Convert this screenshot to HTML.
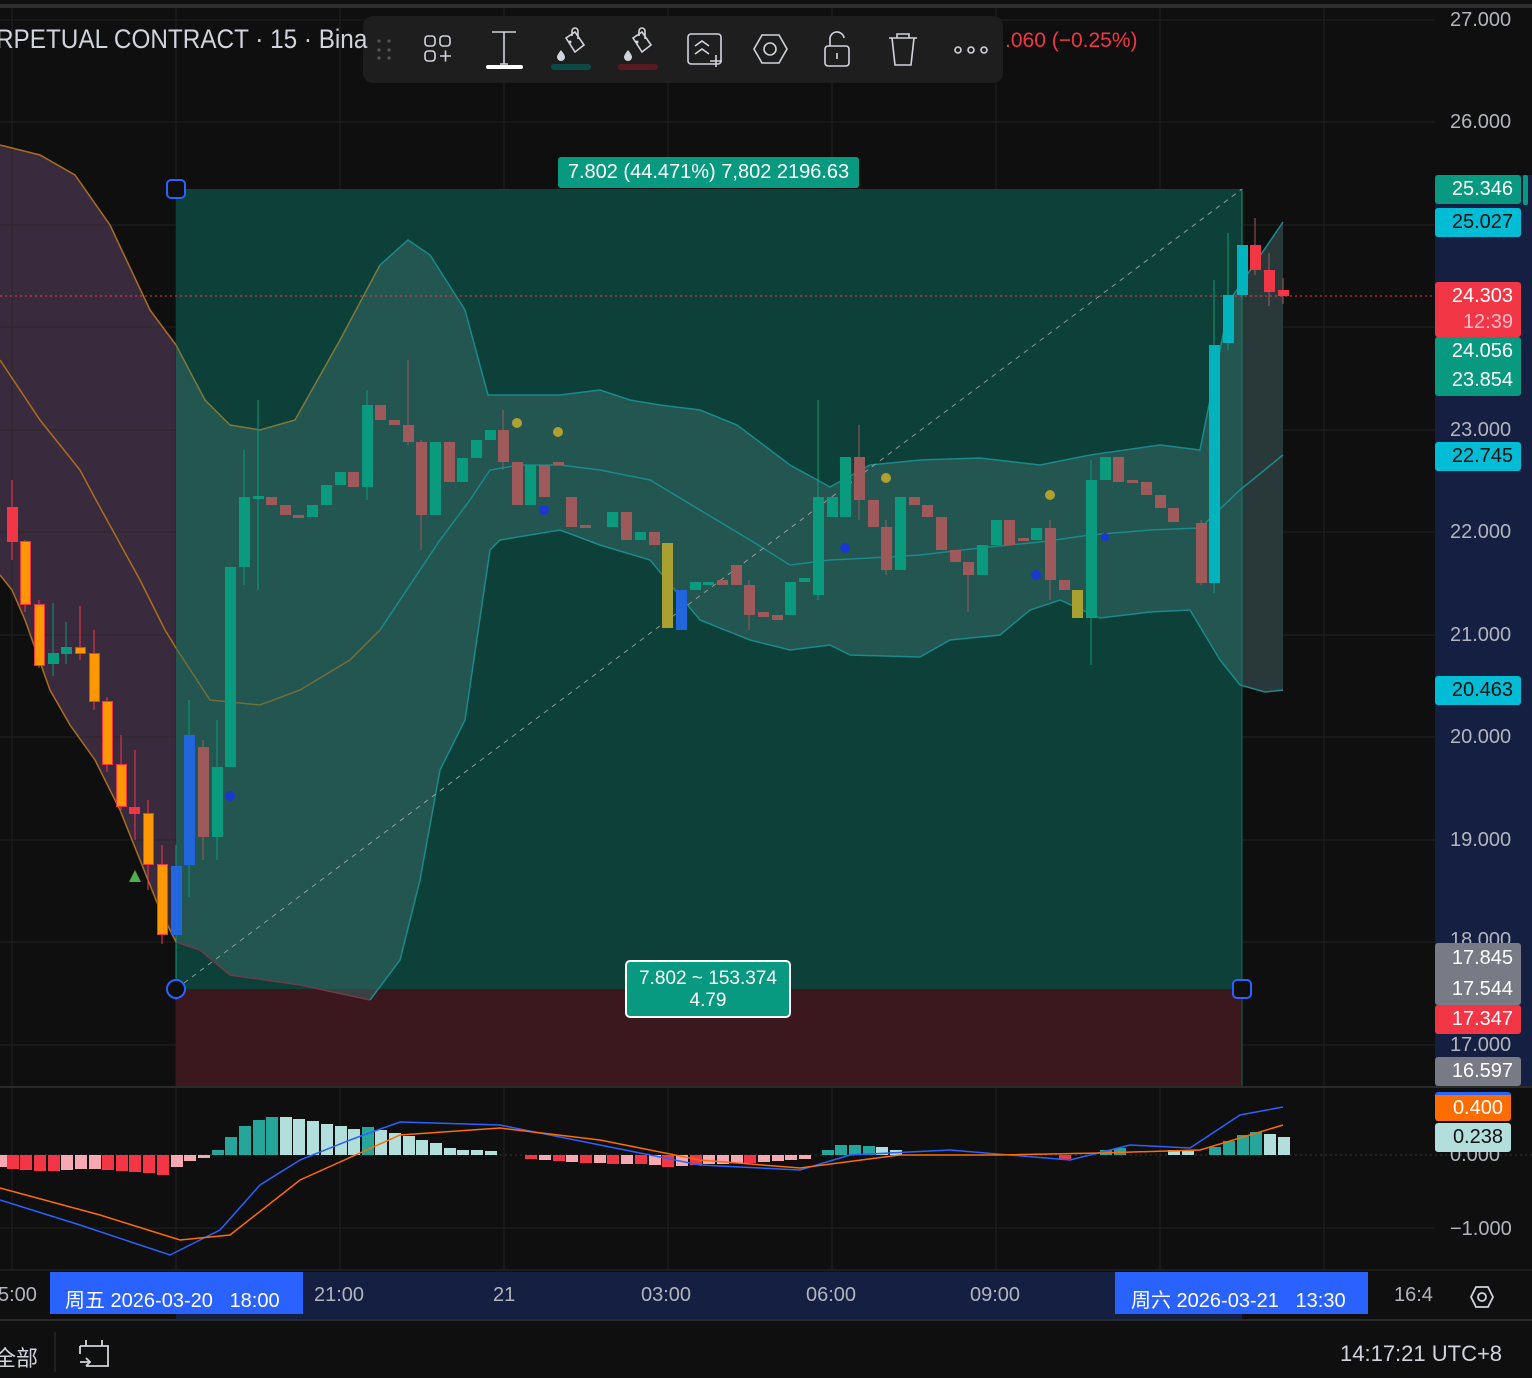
<!DOCTYPE html>
<html><head><meta charset="utf-8"><style>
*{margin:0;padding:0;box-sizing:border-box}
body{width:1532px;height:1378px;background:#0f0f0f;overflow:hidden;position:relative;font-family:"Liberation Sans","Noto Sans CJK SC",sans-serif;color:#b2b5be}
.pl{position:absolute;left:1435px;width:86px;height:29px;border-radius:3px;color:#fff;font-size:20px;text-align:right;padding-right:8px;line-height:29px}
.ax{position:absolute;left:1450px;font-size:20px;color:#b2b5be}
.tl{position:absolute;top:1284px;font-size:20px;color:#b2b5be}
</style></head><body>
<svg width="1532" height="1378" style="position:absolute;left:0;top:0">
<rect x="0" y="4" width="1532" height="4" fill="#2e2e2e"/>
<rect x="1435" y="175" width="97" height="912" fill="#151f42"/>
<!-- purple left band -->
<polygon points="0,145 40,155 75,175 110,225 150,310 176,345 176,942 160,910 140,860 120,810 95,760 70,725 50,690 25,620 12,590 0,575" fill="#3a2a3e"/>
<!-- grid -->
<g stroke="#262626" stroke-width="1" opacity=".8">
<line x1="0" y1="20" x2="1435" y2="20"/><line x1="0" y1="122" x2="1435" y2="122"/><line x1="0" y1="225" x2="1435" y2="225"/><line x1="0" y1="327" x2="1435" y2="327"/><line x1="0" y1="430" x2="1435" y2="430"/><line x1="0" y1="532" x2="1435" y2="532"/><line x1="0" y1="635" x2="1435" y2="635"/><line x1="0" y1="737" x2="1435" y2="737"/><line x1="0" y1="840" x2="1435" y2="840"/><line x1="0" y1="942" x2="1435" y2="942"/><line x1="0" y1="1045" x2="1435" y2="1045"/>
<line x1="12" y1="8" x2="12" y2="1270"/><line x1="176" y1="8" x2="176" y2="1270"/><line x1="340" y1="8" x2="340" y2="1270"/><line x1="504" y1="8" x2="504" y2="1270"/><line x1="668" y1="8" x2="668" y2="1270"/><line x1="832" y1="8" x2="832" y2="1270"/><line x1="996" y1="8" x2="996" y2="1270"/><line x1="1160" y1="8" x2="1160" y2="1270"/><line x1="1324" y1="8" x2="1324" y2="1270"/>
<line x1="0" y1="1228" x2="1435" y2="1228"/>
</g>
<!-- position boxes -->
<rect x="176" y="189" width="1066" height="800" fill="#0c4038"/>
<rect x="176" y="989" width="1066" height="98" fill="#3b181d"/>
<!-- BB fill -->
<polygon points="176,345 205,400 230,425 260,430 295,420 340,340 380,265 408,240 430,255 465,310 488,395 560,395 600,390 630,400 660,405 700,410 737,425 790,465 830,487 870,465 920,460 980,458 1040,465 1090,455 1160,445 1200,450 1230,300 1283,222 1283,690 1265,692 1240,685 1220,660 1190,610 1150,612 1100,618 1060,600 1030,610 1000,635 950,640 920,657 850,655 830,645 790,650 750,640 700,620 650,560 600,545 560,530 500,540 490,550 465,720 440,770 420,880 400,960 370,1000 300,985 230,975 200,950 176,942" fill="#3a6a6a" fill-opacity="0.5"/>
<polygon points="1242,280 1283,222 1283,690 1265,692 1242,685" fill="#29393a"/>
<!-- BB lines -->
<polyline fill="none" stroke="#a86f1f" stroke-width="1.5" points="0,145 40,155 75,175 110,225 150,310 176,345"/>
<polyline fill="none" stroke="#a86f1f" stroke-width="1.5" points="0,360 40,420 80,470 96,500 140,580 165,630 176,648"/>
<polyline fill="none" stroke="#a86f1f" stroke-width="1.5" points="0,575 12,590 25,620 50,690 70,725 95,760 120,810 140,860 160,910 176,942"/>
<polyline fill="none" stroke="#7a7a3a" stroke-width="1.5" points="176,345 205,400 230,425 260,430 295,420 340,340 380,265"/>
<polyline fill="none" stroke="#1a8a8a" stroke-width="1.5" points="380,265 408,240 430,255 465,310 488,395 560,395 600,390 630,400 660,405 700,410 737,425 790,465 830,487 870,465 920,460 980,458 1040,465 1090,455 1160,445 1200,450 1230,300 1283,222"/>
<polyline fill="none" stroke="#6f6f3a" stroke-width="1.5" points="176,648 210,700 260,705 300,690 350,660 380,630"/>
<polyline fill="none" stroke="#1a8a8a" stroke-width="1.5" points="380,630 410,585 440,540 470,500 490,470 520,465 560,465 600,470 650,480 700,510 750,540 790,565 830,560 870,558 920,555 980,548 1040,542 1090,535 1150,530 1200,528 1240,490 1283,455"/>
<polyline fill="none" stroke="#6f3a4a" stroke-width="1.5" points="176,942 200,950 230,975 300,985 370,1000"/>
<polyline fill="none" stroke="#1a8a8a" stroke-width="1.5" points="370,1000 400,960 420,880 440,770 465,720 490,550 500,540 560,530 600,545 650,560 700,620 750,640 790,650 830,645 850,655 920,657 950,640 1000,635 1030,610 1060,600 1100,618 1150,612 1190,610 1220,660 1240,685 1265,692 1283,690"/>
<line x1="176" y1="989" x2="1242" y2="189" stroke="#8a9a98" stroke-width="1" stroke-dasharray="5,5"/>
<line x1="1242" y1="189" x2="1242" y2="1087" stroke="#089981" stroke-width="1" opacity=".6"/>
<line x1="0" y1="296" x2="1435" y2="296" stroke="#f23645" stroke-dasharray="2,3"/>
<!-- candles -->
<g stroke-width="1">
<g stroke="#f23645"><line x1="12" y1="480" x2="12" y2="560"/><line x1="25" y1="540" x2="25" y2="612"/><line x1="39" y1="600" x2="39" y2="668"/><line x1="80" y1="606" x2="80" y2="660"/><line x1="94" y1="630" x2="94" y2="710"/><line x1="107" y1="697" x2="107" y2="772"/><line x1="121" y1="735" x2="121" y2="810"/><line x1="135" y1="750" x2="135" y2="840"/><line x1="148" y1="800" x2="148" y2="890"/><line x1="162" y1="845" x2="162" y2="944"/></g>
<g stroke="#0a9a7d"><line x1="53" y1="603" x2="53" y2="676"/><line x1="66" y1="622" x2="66" y2="664"/><line x1="176" y1="845" x2="176" y2="1000"/><line x1="189" y1="700" x2="189" y2="897"/></g>
<g fill="#f23645"><rect x="7" y="507" width="11" height="35"/><rect x="129" y="807" width="11" height="7"/></g>
<g fill="#ff9800" stroke="#f23645"><rect x="20.5" y="541.5" width="10" height="63"/><rect x="34.5" y="604.5" width="10" height="61"/><rect x="75.5" y="647.5" width="10" height="6"/><rect x="89.5" y="653.5" width="10" height="48"/><rect x="102.5" y="701.5" width="10" height="63"/><rect x="116.5" y="764.5" width="10" height="42"/><rect x="143.5" y="813.5" width="10" height="51"/><rect x="157.5" y="864.5" width="10" height="70"/></g>
<g fill="#0a9a7d"><rect x="48" y="653" width="11" height="11"/><rect x="61" y="647" width="11" height="7"/></g>
<g fill="#2266dd"><rect x="171" y="866" width="11" height="69"/><rect x="184" y="735" width="11" height="130"/><rect x="676" y="590" width="11" height="40"/></g>
<g stroke="#0a9a7d"><line x1="258" y1="400" x2="258" y2="590"/><line x1="244" y1="450" x2="244" y2="585"/><line x1="367" y1="390" x2="367" y2="500"/><line x1="818" y1="400" x2="818" y2="600"/><line x1="1091" y1="460" x2="1091" y2="665"/><line x1="1214" y1="280" x2="1214" y2="593"/><line x1="1228" y1="233" x2="1228" y2="350"/><line x1="1242" y1="189" x2="1242" y2="300"/><line x1="217" y1="720" x2="217" y2="860"/></g>
<g stroke="#9e5a5a"><line x1="203" y1="740" x2="203" y2="860"/><line x1="408" y1="360" x2="408" y2="445"/><line x1="421" y1="440" x2="421" y2="550"/><line x1="503" y1="410" x2="503" y2="470"/><line x1="859" y1="425" x2="859" y2="520"/><line x1="886" y1="520" x2="886" y2="575"/><line x1="1050" y1="520" x2="1050" y2="600"/><line x1="1201" y1="520" x2="1201" y2="585"/><line x1="968" y1="565" x2="968" y2="612"/><line x1="749" y1="580" x2="749" y2="630"/><line x1="1255" y1="218" x2="1255" y2="275"/><line x1="1269" y1="253" x2="1269" y2="306"/><line x1="1283" y1="278" x2="1283" y2="304"/></g>
<g fill="#0a9a7d"><rect x="212" y="767" width="11" height="70"/><rect x="225" y="567" width="11" height="200"/><rect x="239" y="497" width="11" height="70"/><rect x="253" y="496" width="11" height="3"/><rect x="307" y="505" width="11" height="12"/><rect x="321" y="485" width="11" height="20"/><rect x="335" y="472" width="11" height="13"/><rect x="362" y="405" width="11" height="82"/><rect x="430" y="442" width="11" height="73"/><rect x="457" y="458" width="11" height="24"/><rect x="471" y="440" width="11" height="18"/><rect x="485" y="430" width="11" height="10"/><rect x="525" y="465" width="11" height="40"/><rect x="607" y="512" width="11" height="15"/><rect x="635" y="532" width="11" height="8"/><rect x="690" y="582" width="11" height="8"/><rect x="703" y="582" width="11" height="3"/><rect x="785" y="582" width="11" height="33"/><rect x="799" y="578" width="11" height="4"/><rect x="813" y="497" width="11" height="98"/><rect x="827" y="497" width="11" height="20"/><rect x="840" y="457" width="11" height="60"/><rect x="895" y="497" width="11" height="73"/><rect x="977" y="545" width="11" height="30"/><rect x="991" y="520" width="11" height="25"/><rect x="1031" y="528" width="11" height="12"/><rect x="1086" y="480" width="11" height="138"/><rect x="1100" y="457" width="11" height="23"/></g>
<g fill="#9e5a5a"><rect x="198" y="747" width="11" height="90"/><rect x="266" y="497" width="11" height="8"/><rect x="280" y="505" width="11" height="10"/><rect x="293" y="515" width="11" height="3"/><rect x="348" y="472" width="11" height="15"/><rect x="375" y="405" width="11" height="15"/><rect x="389" y="420" width="11" height="5"/><rect x="403" y="425" width="11" height="17"/><rect x="416" y="442" width="11" height="73"/><rect x="444" y="442" width="11" height="40"/><rect x="498" y="430" width="11" height="32"/><rect x="512" y="462" width="11" height="43"/><rect x="539" y="465" width="11" height="32"/><rect x="553" y="462" width="11" height="3"/><rect x="566" y="497" width="11" height="30"/><rect x="580" y="525" width="11" height="3"/><rect x="621" y="512" width="11" height="28"/><rect x="649" y="532" width="11" height="13"/><rect x="717" y="580" width="11" height="5"/><rect x="731" y="565" width="11" height="20"/><rect x="744" y="585" width="11" height="30"/><rect x="758" y="612" width="11" height="5"/><rect x="772" y="615" width="11" height="5"/><rect x="854" y="457" width="11" height="43"/><rect x="868" y="500" width="11" height="27"/><rect x="881" y="527" width="11" height="43"/><rect x="909" y="497" width="11" height="8"/><rect x="922" y="505" width="11" height="12"/><rect x="936" y="517" width="11" height="33"/><rect x="950" y="550" width="11" height="12"/><rect x="963" y="562" width="11" height="13"/><rect x="1004" y="520" width="11" height="25"/><rect x="1018" y="538" width="11" height="3"/><rect x="1045" y="528" width="11" height="52"/><rect x="1059" y="580" width="11" height="10"/><rect x="1113" y="457" width="11" height="25"/><rect x="1127" y="480" width="11" height="3"/><rect x="1141" y="482" width="11" height="13"/><rect x="1155" y="495" width="11" height="13"/><rect x="1168" y="508" width="11" height="14"/><rect x="1196" y="523" width="11" height="60"/></g>
<g fill="#a9a032"><rect x="662" y="543" width="11" height="85"/><rect x="1072" y="590" width="11" height="28"/></g>
<g fill="#00b3bd"><rect x="1209" y="345" width="11" height="238"/><rect x="1223" y="295" width="11" height="48"/><rect x="1237" y="245" width="11" height="50"/></g>
<g fill="#f23645"><rect x="1250" y="245" width="11" height="25"/><rect x="1264" y="270" width="11" height="22"/><rect x="1278" y="290" width="11" height="6"/></g>
</g>
<g fill="#b0a030"><circle cx="517" cy="423" r="5"/><circle cx="558" cy="432" r="5"/><circle cx="886" cy="478" r="5"/><circle cx="1050" cy="495" r="5"/></g>
<g fill="#1838d0"><circle cx="230" cy="796" r="5"/><circle cx="544" cy="510" r="5"/><circle cx="845" cy="548" r="5"/><circle cx="1036" cy="575" r="5"/><circle cx="1105" cy="537" r="4"/></g>
<polygon points="129,882 135,870 141,882" fill="#4caf50"/>
<rect x="167" y="180" width="18" height="18" rx="4" fill="#0f0f0f" stroke="#2962ff" stroke-width="2"/>
<rect x="1233" y="980" width="18" height="18" rx="4" fill="#0f0f0f" stroke="#2962ff" stroke-width="2"/>
<circle cx="176" cy="989" r="9" fill="#0f0f0f" stroke="#2962ff" stroke-width="2"/>
<!-- MACD pane -->
<line x1="0" y1="1087" x2="1532" y2="1087" stroke="#2a2a2a" stroke-width="2"/>
<line x1="0" y1="1155" x2="1532" y2="1155" stroke="#333" stroke-dasharray="2,3"/>
<g fill="#f7a9b3"><rect x="0" y="1155" width="12" height="12"/><rect x="61" y="1155" width="12" height="15"/><rect x="75" y="1155" width="12" height="14"/><rect x="89" y="1155" width="12" height="14"/><rect x="171" y="1155" width="12" height="12"/><rect x="184" y="1155" width="12" height="6"/><rect x="198" y="1155" width="12" height="3"/></g>
<g fill="#f23645"><rect x="7" y="1155" width="12" height="14"/><rect x="20" y="1155" width="12" height="15"/><rect x="34" y="1155" width="12" height="16"/><rect x="48" y="1155" width="12" height="16"/><rect x="102" y="1155" width="12" height="15"/><rect x="116" y="1155" width="12" height="16"/><rect x="143" y="1155" width="12" height="18"/><rect x="157" y="1155" width="12" height="20"/><rect x="129" y="1155" width="12" height="17"/></g>
<g fill="#26a69a"><rect x="212" y="1150" width="12" height="5"/><rect x="225" y="1137" width="12" height="18"/><rect x="239" y="1126" width="12" height="29"/><rect x="253" y="1120" width="12" height="35"/><rect x="266" y="1117" width="12" height="38"/></g>
<g fill="#b2dfdb"><rect x="280" y="1117" width="12" height="38"/><rect x="293" y="1119" width="12" height="36"/><rect x="307" y="1121" width="12" height="34"/><rect x="321" y="1124" width="12" height="31"/><rect x="335" y="1126" width="12" height="29"/><rect x="348" y="1129" width="12" height="26"/><rect x="375" y="1130" width="12" height="25"/><rect x="389" y="1133" width="12" height="22"/><rect x="403" y="1136" width="12" height="19"/><rect x="416" y="1140" width="12" height="15"/><rect x="430" y="1143" width="12" height="12"/><rect x="444" y="1148" width="12" height="7"/><rect x="457" y="1150" width="12" height="5"/><rect x="471" y="1150" width="12" height="5"/><rect x="485" y="1151" width="12" height="4"/><rect x="876" y="1147" width="12" height="8"/><rect x="890" y="1150" width="12" height="5"/><rect x="1264" y="1134" width="12" height="21"/><rect x="1278" y="1137" width="12" height="18"/><rect x="1168" y="1150" width="12" height="5"/><rect x="1182" y="1151" width="12" height="4"/></g>
<g fill="#26a69a"><rect x="362" y="1127" width="12" height="28"/><rect x="822" y="1150" width="12" height="5"/><rect x="835" y="1145" width="12" height="10"/><rect x="849" y="1145" width="12" height="10"/><rect x="863" y="1146" width="12" height="9"/><rect x="1100" y="1150" width="12" height="5"/><rect x="1114" y="1148" width="12" height="7"/><rect x="1209" y="1147" width="12" height="8"/><rect x="1223" y="1141" width="12" height="14"/><rect x="1237" y="1135" width="12" height="20"/><rect x="1250" y="1132" width="12" height="23"/></g>
<g fill="#f23645"><rect x="525" y="1155" width="12" height="4"/><rect x="553" y="1155" width="12" height="6"/><rect x="580" y="1155" width="12" height="8"/><rect x="607" y="1155" width="12" height="9"/><rect x="635" y="1155" width="12" height="9"/><rect x="662" y="1155" width="12" height="12"/><rect x="690" y="1155" width="12" height="10"/><rect x="744" y="1155" width="12" height="8"/><rect x="1059" y="1155" width="12" height="4"/></g>
<g fill="#f7a9b3"><rect x="539" y="1155" width="12" height="5"/><rect x="566" y="1155" width="12" height="7"/><rect x="594" y="1155" width="12" height="8"/><rect x="621" y="1155" width="12" height="9"/><rect x="649" y="1155" width="12" height="10"/><rect x="676" y="1155" width="12" height="11"/><rect x="703" y="1155" width="12" height="9"/><rect x="717" y="1155" width="12" height="9"/><rect x="731" y="1155" width="12" height="8"/><rect x="758" y="1155" width="12" height="7"/><rect x="772" y="1155" width="12" height="6"/><rect x="785" y="1155" width="12" height="5"/><rect x="799" y="1155" width="12" height="4"/></g>
<polyline fill="none" stroke="#2962ff" stroke-width="1.5" points="0,1200 80,1225 170,1255 220,1230 260,1185 300,1160 350,1140 400,1122 500,1125 600,1145 700,1165 800,1170 850,1155 950,1150 1070,1160 1130,1145 1190,1148 1240,1115 1283,1107"/>
<polyline fill="none" stroke="#ff6d00" stroke-width="1.5" points="0,1188 100,1215 180,1240 230,1235 300,1180 400,1135 500,1128 600,1140 700,1160 800,1168 900,1155 1000,1155 1100,1153 1200,1150 1283,1125"/>
<!-- time axis -->
<line x1="0" y1="1270" x2="1532" y2="1270" stroke="#2a2a2a"/>
<rect x="176" y="1272" width="1066" height="48" fill="#151f42"/>
<line x1="0" y1="1320" x2="1532" y2="1320" stroke="#2a2a2a" stroke-width="2"/>
<rect x="50" y="1272" width="253" height="42" fill="#2962ff"/>
<rect x="1115" y="1272" width="253" height="42" fill="#2962ff"/>
<polygon points="1471,1297 1476,1287 1488,1287 1493,1297 1488,1307 1476,1307" fill="none" stroke="#d1d4dc" stroke-width="1.8"/>
<circle cx="1482" cy="1297" r="4" fill="none" stroke="#d1d4dc" stroke-width="1.8"/>
<line x1="55" y1="1332" x2="55" y2="1372" stroke="#333"/>
<path d="M80 1346 h28 v20 h-22 M80 1346 v8 M86 1340 v6 M102 1340 v6 M80 1362 h10 M86 1358 l4 4 l-4 4" fill="none" stroke="#d1d4dc" stroke-width="1.8"/>
<!-- toolbar -->
<rect x="363" y="16" width="640" height="67" rx="10" fill="#1e1e1e"/>
<g fill="#555"><circle cx="379" cy="41" r="1.6"/><circle cx="389" cy="41" r="1.6"/><circle cx="379" cy="50" r="1.6"/><circle cx="389" cy="50" r="1.6"/><circle cx="379" cy="58" r="1.6"/><circle cx="389" cy="58" r="1.6"/></g>
<g fill="none" stroke="#d1d4dc" stroke-width="1.6">
<rect x="425" y="36" width="10" height="10" rx="3"/><rect x="440" y="36" width="10" height="10" rx="3"/><rect x="425" y="51" width="10" height="10" rx="3"/><path d="M440 56h11M445.5 50.5v11"/>
<path d="M492 32h24M504 32v32M500 64h8"/>
<path d="M566 38 l9 -6 l9 13 l-9 7 z M572 36 v-5 a3 3 0 0 1 6 0 v8"/>
<path d="M633 38 l9 -6 l9 13 l-9 7 z M639 36 v-5 a3 3 0 0 1 6 0 v8"/>
<rect x="688" y="34" width="33" height="30" rx="3"/><path d="M695 54 l7 -5 l7 5 M695 46 l7 -5 l7 5 M716 55v12M710 61h12"/>
<polygon points="754,49 762,35 779,35 787,49 779,63 762,63"/><circle cx="770" cy="49" r="6"/>
<rect x="825" y="46" width="24" height="20" rx="3"/><path d="M830 46 v-6 a7 7 0 0 1 14 -2 M837 53v6"/>
<path d="M889 38h28M897 38v-4h12v4M892 38l3 27h16l3 -27"/>
<circle cx="958" cy="50" r="3"/><circle cx="971" cy="50" r="3"/><circle cx="984" cy="50" r="3"/>
</g>
<g fill="#d1d4dc"><path d="M561 50 q-4 5 -4 7 a4 4 0 0 0 8 0 q0 -2 -4 -7z"/><path d="M628 50 q-4 5 -4 7 a4 4 0 0 0 8 0 q0 -2 -4 -7z"/><circle cx="570" cy="42" r="1.5"/><circle cx="637" cy="42" r="1.5"/></g>
<rect x="486" y="65" width="37" height="4" rx="2" fill="#fff"/>
<rect x="551" y="64" width="40" height="6" rx="3" fill="#0d4a45"/>
<rect x="618" y="64" width="40" height="6" rx="3" fill="#5a1a22"/>
</svg>
<div style="position:absolute;left:-4px;top:24px;font-size:27px;color:#d1d4dc;transform:scaleX(0.9);transform-origin:left">RPETUAL CONTRACT · 15 · Bina</div>
<div style="position:absolute;left:1005px;top:29px;font-size:21px;color:#f23645">.060 (−0.25%)</div>
<div style="position:absolute;left:558px;top:157px;width:301px;height:31px;background:#089981;border-radius:3px;color:#fff;font-size:20px;line-height:31px;text-align:center">7.802 (44.471%) 7,802 2196.63</div>
<div style="position:absolute;left:625px;top:960px;width:166px;height:58px;background:#089981;border:2px solid #fff;border-radius:5px;color:#fff;font-size:19px;line-height:22px;text-align:center;padding-top:6px">7.802 ~ 153.374<br>4.79</div>
<div class="ax" style="top:9px">27.000</div><div class="ax" style="top:111px">26.000</div>
<div class="ax" style="top:419px">23.000</div><div class="ax" style="top:521px">22.000</div><div class="ax" style="top:624px">21.000</div><div class="ax" style="top:726px">20.000</div><div class="ax" style="top:829px">19.000</div><div class="ax" style="top:929px">18.000</div><div class="ax" style="top:1034px">17.000</div>
<div class="ax" style="top:1144px">0.000</div><div class="ax" style="top:1218px">−1.000</div>
<div class="pl" style="top:175px;background:#089981">25.346</div>
<div class="pl" style="top:208px;background:#00bcd4;color:#111">25.027</div>
<div class="pl" style="top:282px;height:55px;background:#f23645;line-height:26px;padding-top:1px">24.303<br><span style="color:#fbc">12:39</span></div>
<div class="pl" style="top:337px;height:59px;background:#089981;line-height:29px">24.056<br>23.854</div>
<div class="pl" style="top:442px;background:#00bcd4;color:#111">22.745</div>
<div class="pl" style="top:676px;background:#00bcd4;color:#111">20.463</div>
<div class="pl" style="top:943px;height:62px;background:#787b86;line-height:31px">17.845<br>17.544</div>
<div class="pl" style="top:1005px;background:#f23645">17.347</div>
<div class="pl" style="top:1057px;background:#787b86">16.597</div>
<div class="pl" style="top:1092px;width:76px;background:#ff6d00;border-top:3px solid #2962ff;line-height:26px">0.400</div>
<div class="pl" style="top:1123px;width:76px;background:#b2dfdb;color:#111">0.238</div>
<div style="position:absolute;left:1523px;top:175px;width:5px;height:30px;background:#089981;border-radius:2px"></div>
<div class="tl" style="left:-2px">5:00</div>
<div class="tl" style="left:65px;color:#fff">周五 2026-03-20 &nbsp;&nbsp;18:00</div>
<div class="tl" style="left:314px">21:00</div><div class="tl" style="left:493px">21</div><div class="tl" style="left:641px">03:00</div><div class="tl" style="left:806px">06:00</div><div class="tl" style="left:970px">09:00</div>
<div class="tl" style="left:1131px;color:#fff">周六 2026-03-21 &nbsp;&nbsp;13:30</div>
<div class="tl" style="left:1394px">16:4</div>
<div style="position:absolute;left:-6px;top:1341px;font-size:22px;color:#d1d4dc">全部</div>
<div style="position:absolute;left:1340px;top:1341px;font-size:22px;color:#d1d4dc">14:17:21 UTC+8</div>
</body></html>
